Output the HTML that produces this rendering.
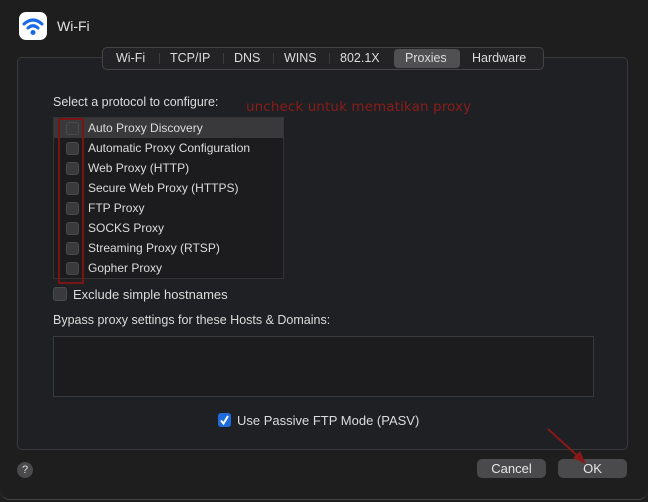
<!DOCTYPE html><html><head><style>
body{margin:0;width:648px;height:502px;background:#1e1e1e;font-family:"Liberation Sans",sans-serif;color:#dcdcdc;overflow:hidden;position:relative;font-size:12px}
.a{position:absolute}
.cb{position:absolute;width:11px;height:11px;border-radius:3px;background:#3a3a3c;border:1px solid #4a4a4a}
.row{position:absolute;left:0;width:229px;height:20px;line-height:20px}
.row span{position:absolute;left:34px}
.btn{position:absolute;height:19px;line-height:19px;background:#4a4a4c;border-radius:5px;text-align:center;color:#e6e6e6;font-size:13px}
.t{position:absolute;top:0;line-height:21px}
.s{position:absolute;top:5px;width:1px;height:11px;background:#3c3c3e}
</style></head><body>
<div class="a" style="left:0;top:0;width:648px;height:499px;border-bottom:1px solid #444;border-radius:0 0 10px 10px"></div>
<div class="a" style="left:19px;top:12px;width:28px;height:28px;background:#fff;border-radius:7px"></div>
<svg class="a" style="left:19px;top:12px" width="28" height="28" viewBox="0 0 28 28"><g fill="none" stroke="#1a6ae8" stroke-width="3" stroke-linecap="round"><path d="M5 12 Q14 4 23 12"/><path d="M9 16 Q14 11.5 19 16"/></g><circle cx="14" cy="20.5" r="2.5" fill="#1a6ae8"/></svg>
<div class="a" style="left:57px;top:18px;font-size:14px;color:#e0e0e0">Wi-Fi</div>
<div class="a" style="left:17px;top:57px;width:609px;height:391px;background:#1f2023;border:1px solid #3a3a3c;border-radius:5px"></div>
<div class="a" style="left:102px;top:47px;width:440px;height:21px;background:#232325;border:1px solid #444;border-radius:5px;font-size:12.5px">
<span class="t" style="left:13px">Wi-Fi</span><span class="s" style="left:56px"></span>
<span class="t" style="left:67px">TCP/IP</span><span class="s" style="left:120px"></span>
<span class="t" style="left:131px">DNS</span><span class="s" style="left:170px"></span>
<span class="t" style="left:181px">WINS</span><span class="s" style="left:226px"></span>
<span class="t" style="left:237px">802.1X</span>
<span class="a" style="left:291px;top:1px;width:66px;height:19px;background:#505053;border-radius:4px"></span>
<span class="t" style="left:302px">Proxies</span>
<span class="t" style="left:369px">Hardware</span></div>
<div class="a" style="left:53px;top:95px;font-size:12.5px">Select a protocol to configure:</div>
<div class="a" style="left:246px;top:99px;font-size:13.5px;color:#8a1c1c;font-family:'DejaVu Sans',sans-serif;letter-spacing:0.1px">uncheck untuk mematikan proxy</div>
<div class="a" style="left:53px;top:117px;width:229px;height:160px;background:#1c1c1e;border:1px solid #343436;font-size:12px">
<div class="row" style="top:0;background:#39393b"><div class="cb" style="left:12px;top:4px"></div><span>Auto Proxy Discovery</span></div>
<div class="row" style="top:20px"><div class="cb" style="left:12px;top:4px"></div><span>Automatic Proxy Configuration</span></div>
<div class="row" style="top:40px"><div class="cb" style="left:12px;top:4px"></div><span>Web Proxy (HTTP)</span></div>
<div class="row" style="top:60px"><div class="cb" style="left:12px;top:4px"></div><span>Secure Web Proxy (HTTPS)</span></div>
<div class="row" style="top:80px"><div class="cb" style="left:12px;top:4px"></div><span>FTP Proxy</span></div>
<div class="row" style="top:100px"><div class="cb" style="left:12px;top:4px"></div><span>SOCKS Proxy</span></div>
<div class="row" style="top:120px"><div class="cb" style="left:12px;top:4px"></div><span>Streaming Proxy (RTSP)</span></div>
<div class="row" style="top:140px"><div class="cb" style="left:12px;top:4px"></div><span>Gopher Proxy</span></div>
</div>
<div class="a" style="left:58px;top:118px;width:22px;height:162px;border:2px solid #7a1515"></div>
<div class="cb" style="left:53px;top:287px;width:12px;height:12px"></div>
<div class="a" style="left:73px;top:287px;font-size:13px">Exclude simple hostnames</div>
<div class="a" style="left:53px;top:313px;font-size:12.5px">Bypass proxy settings for these Hosts &amp; Domains:</div>
<div class="a" style="left:53px;top:336px;width:539px;height:59px;background:#1c1c1e;border:1px solid #3a3a3c"></div>
<div class="a" style="left:218px;top:413px;width:13px;height:14px;background:#1f6bdc;border-radius:3px"></div>
<svg class="a" style="left:218px;top:413px" width="13" height="14"><path d="M3 7.5 L5.5 10.5 L10 3" fill="none" stroke="#fff" stroke-width="2"/></svg>
<div class="a" style="left:237px;top:413px;font-size:13px">Use Passive FTP Mode (PASV)</div>
<div class="a" style="left:17px;top:462px;width:16px;height:16px;border-radius:50%;background:#4a4a4c;text-align:center;line-height:16px;font-size:11px">?</div>
<div class="btn" style="left:477px;top:459px;width:69px">Cancel</div>
<div class="btn" style="left:558px;top:459px;width:69px">OK</div>
<svg class="a" style="left:540px;top:425px" width="60" height="50"><path d="M8 4 L41 34" stroke="#8a1818" stroke-width="2"/><path d="M46 39 L33 33 L40 26 Z" fill="#8a1818"/></svg>
</body></html>
